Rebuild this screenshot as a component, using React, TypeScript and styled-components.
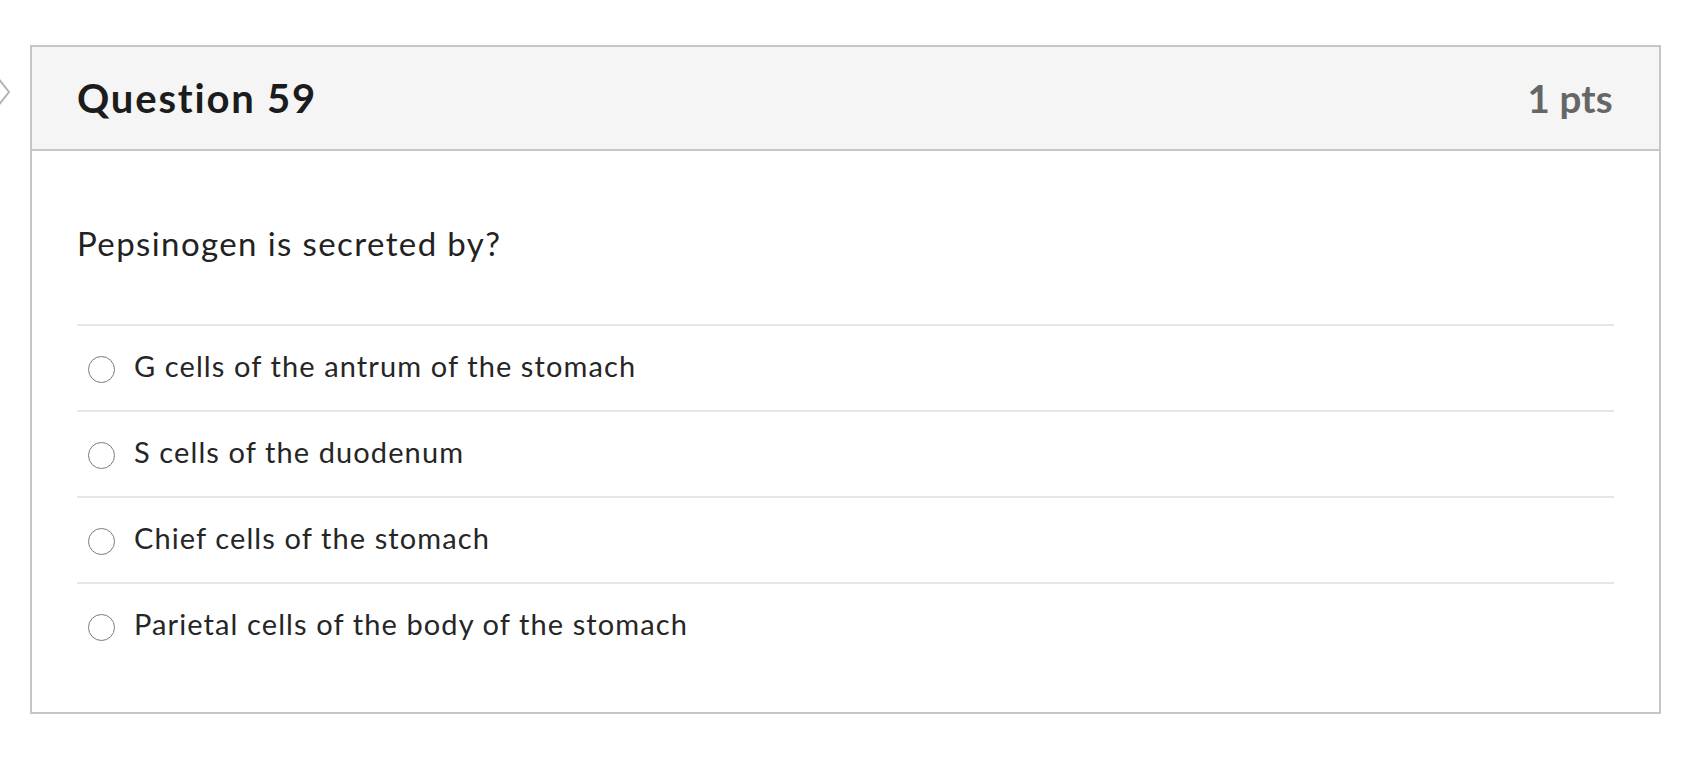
import React from "react";
import styled, { createGlobalStyle } from "styled-components";

const GlobalStyle = createGlobalStyle`
  html, body {
    margin: 0;
    padding: 0;
    background: #ffffff;
  }
  body {
    font-family: Lato, "Liberation Sans", Arial, sans-serif;
    color: #2b2b2b;
  }
`;

const Page = styled.div`
  display: flex;
  align-items: flex-start;
  width: 1688px;
  min-height: 758px;
  padding-top: 45px;
  box-sizing: border-box;
`;

const Gutter = styled.div`
  width: 30px;
  flex: 0 0 30px;
  padding-top: 31px;
  display: flex;
`;

const Card = styled.section`
  width: 1631px;
  box-sizing: border-box;
  border: 2px solid #c6c6c6;
  background: #ffffff;
`;

const Header = styled.header`
  display: flex;
  align-items: center;
  justify-content: space-between;
  height: 102px;
  padding: 0 46px 0 45px;
  background: #f5f5f5;
  border-bottom: 2px solid #c6c6c6;
`;

const Title = styled.h2`
  margin: 0;
  font-family: Lato, "Liberation Sans", sans-serif;
  font-weight: 700;
  font-size: 40px;
  letter-spacing: 1.8px;
  color: #1c1c1c;
  line-height: 1.2;
`;

const Points = styled.span`
  font-family: Lato, "Liberation Sans", sans-serif;
  font-weight: 700;
  font-size: 38.5px;
  letter-spacing: 0.2px;
  color: #666666;
  line-height: 1.2;
`;

const Body = styled.div`
  padding: 73px 45px 44px 45px;
`;

const Prompt = styled.p`
  margin: 0 0 62px 0;
  font-size: 33px;
  letter-spacing: 1.4px;
  line-height: 38px;
  color: #222222;
`;

const Answers = styled.ul`
  list-style: none;
  margin: 0;
  padding: 0;
`;

const AnswerRow = styled.li`
  display: flex;
  align-items: center;
  height: 84px;
  border-top: 2px solid #e6e6e6;
  padding-left: 11px;
`;

const Radio = styled.span`
  box-sizing: border-box;
  width: 27px;
  height: 27px;
  flex: 0 0 27px;
  border-radius: 50%;
  border: 1.5px solid #7a7a7a;
  background: #ffffff;
  margin-right: 19px;
  margin-top: 3px;
`;

const AnswerText = styled.span`
  font-size: 29px;
  letter-spacing: 1.1px;
  line-height: 34px;
  color: #262626;
  margin-top: -4px;
`;

const answers = [
  "G cells of the antrum of the stomach",
  "S cells of the duodenum",
  "Chief cells of the stomach",
  "Parietal cells of the body of the stomach",
];

export default function App() {
  return (
    <>
      <GlobalStyle />
      <Page>
        <Gutter>
          <svg width="30" height="32" viewBox="0 0 30 32" aria-hidden="true">
            <polyline
              points="-2,2 9,16 -2,30"
              fill="none"
              stroke="#b4b4b4"
              strokeWidth="2"
            />
          </svg>
        </Gutter>
        <Card>
          <Header>
            <Title>Question 59</Title>
            <Points>1 pts</Points>
          </Header>
          <Body>
            <Prompt>Pepsinogen is secreted by?</Prompt>
            <Answers>
              {answers.map((a) => (
                <AnswerRow key={a}>
                  <Radio />
                  <AnswerText>{a}</AnswerText>
                </AnswerRow>
              ))}
            </Answers>
          </Body>
        </Card>
      </Page>
    </>
  );
}
